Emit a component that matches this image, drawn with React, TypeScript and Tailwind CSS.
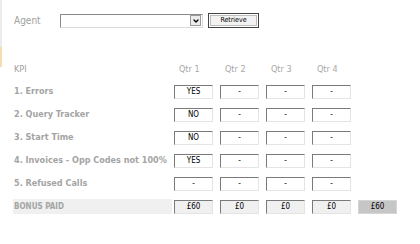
import { ChevronDown } from 'lucide-react';

const quarters = ['Qtr 1', 'Qtr 2', 'Qtr 3', 'Qtr 4'];

const rows = [
  { label: '1. Errors', values: ['YES', '-', '-', '-'] },
  { label: '2. Query Tracker', values: ['NO', '-', '-', '-'] },
  { label: '3. Start Time', values: ['NO', '-', '-', '-'] },
  { label: '4. Invoices - Opp Codes not 100%', values: ['YES', '-', '-', '-'] },
  { label: '5. Refused Calls', values: ['-', '-', '-', '-'] },
];

const bonus = ['£60', '£0', '£0', '£0'];

function Cell({ value, shaded }: { value: string; shaded?: boolean }) {
  return (
    <div
      className={`h-[14px] w-[39px] flex items-center justify-center border-t border-l border-t-[#7a7a7a] border-l-[#7a7a7a] border-b border-r border-b-[#e4e4e4] border-r-[#e4e4e4] text-[8px] text-black ${
        shaded ? 'bg-[#f0f0f0]' : 'bg-white'
      }`}
    >
      {value}
    </div>
  );
}

export default function App() {
  return (
    <div
      className="flex w-[420px] h-[244px] bg-white overflow-hidden"
      style={{ fontFamily: '"DejaVu Sans Condensed", "DejaVu Sans", sans-serif' }}
    >
      <div className="w-[2px] flex flex-col">
        <div className="h-[47px] bg-[#ececec]" />
        <div className="h-[20px] bg-[#f7dcb2]" />
      </div>

      <div className="flex-1 pl-[12px]">
        <div className="flex items-center h-[15px] mt-[13px]">
          <span className="w-[46px] text-[10px] text-[#a0a0a0]">Agent</span>
          <div className="w-[143px] h-[14px] border-t border-l border-t-[#8a8a8a] border-l-[#8a8a8a] border-b border-r border-b-[#dcdcdc] border-r-[#dcdcdc] flex justify-end items-center pr-[1px]">
            <div className="w-[11px] h-[11px] bg-[#ececec] border border-[#9a9a9a] flex items-center justify-center">
              <ChevronDown className="w-[8px] h-[8px] text-black" strokeWidth={4} />
            </div>
          </div>
          <div className="ml-[5px] w-[51px] h-[15px] border border-[#444] p-[1px]">
            <div className="w-full h-full bg-[#f2f2f2] border border-[#bdbdbd] flex items-center justify-center text-[7px] text-black leading-none">
              Retrieve
            </div>
          </div>
        </div>

        <div className="mt-[36px] grid grid-cols-[153px_39px_39px_39px_39px_39px] gap-x-[7px]">
          <div className="h-[12px] flex items-center text-[9px] text-[#a0a0a0]">KPI</div>
          {quarters.map((q) => (
            <div key={q} className="h-[12px] flex items-center pl-[5px] text-[9px] text-[#a8a8a8]">
              {q}
            </div>
          ))}
          <div />

          {rows.map((r) => (
            <div key={r.label} className="contents">
              <div className="h-[14px] mt-[9px] flex items-center text-[9px] font-bold text-[#a4a4a4] whitespace-nowrap">
                {r.label}
              </div>
              {r.values.map((v, i) => (
                <div key={i} className="mt-[9px]">
                  <Cell value={v} />
                </div>
              ))}
              <div />
            </div>
          ))}

          <div className="h-[15px] mt-[8px] ml-[-1px] mr-[-5px] pl-[1px] flex items-center bg-[#f0f0f0] text-[8px] font-bold text-[#a4a4a4]">
            BONUS PAID
          </div>
          {bonus.map((v, i) => (
            <div key={i} className="mt-[9px]">
              <Cell value={v} shaded />
            </div>
          ))}
          <div className="mt-[9px] h-[14px] w-[39px] bg-[#c6c6c6] border border-[#d6d6d6] flex items-center justify-center text-[8px] text-black">
            £60
          </div>
        </div>
      </div>
    </div>
  );
}
